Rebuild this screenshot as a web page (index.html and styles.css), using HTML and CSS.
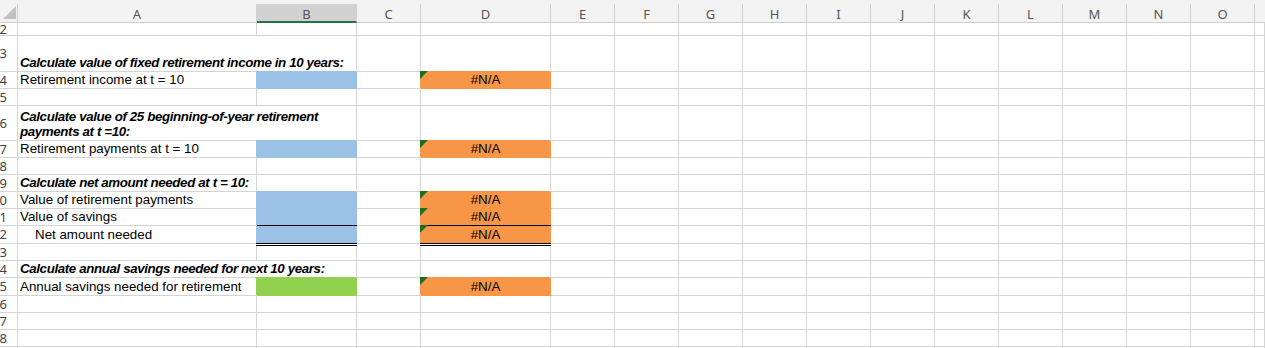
FILE: index.html
```html
<!DOCTYPE html>
<html lang="en">
<head>
    <meta charset="UTF-8">
    <meta name="viewport" content="width=device-width, initial-scale=1.0">
    <title>Retirement Savings</title>
    <link rel="stylesheet" href="styles.css">
</head>
<body>
    <div class="sheet">
        <!-- column headers -->
        <div class="row head">
            <div class="corner"><span class="tri"></span></div>
            <div>A</div><div class="sel">B</div><div>C</div><div>D</div><div>E</div><div>F</div><div>G</div><div>H</div>
            <div>I</div><div>J</div><div>K</div><div>L</div><div>M</div><div>N</div><div>O</div><div class="last"></div>
        </div>

        <div class="row h13">
            <div class="num">2</div><div></div><div></div><div></div><div></div><div></div><div></div><div></div><div></div>
            <div></div><div></div><div></div><div></div><div></div><div></div><div></div><div></div>
        </div>

        <div class="row h36">
            <div class="num">3</div><div class="title spill">Calculate value of fixed retirement income in 10 years:</div><div></div><div></div><div></div><div></div><div></div><div></div><div></div>
            <div></div><div></div><div></div><div></div><div></div><div></div><div></div><div></div>
        </div>

        <div class="row h17">
            <div class="num">4</div><div>Retirement income at t = 10</div><div class="blue"></div><div></div><div class="orange flag val">#N/A</div><div></div><div></div><div></div><div></div>
            <div></div><div></div><div></div><div></div><div></div><div></div><div></div><div></div>
        </div>

        <div class="row h17">
            <div class="num">5</div><div></div><div></div><div></div><div></div><div></div><div></div><div></div><div></div>
            <div></div><div></div><div></div><div></div><div></div><div></div><div></div><div></div>
        </div>

        <div class="row h35">
            <div class="num">6</div><div class="title spill">Calculate value of 25 beginning-of-year retirement<br>payments at t =10:</div><div></div><div></div><div></div><div></div><div></div><div></div><div></div>
            <div></div><div></div><div></div><div></div><div></div><div></div><div></div><div></div>
        </div>

        <div class="row h17">
            <div class="num">7</div><div>Retirement payments at t = 10</div><div class="blue"></div><div></div><div class="orange flag val">#N/A</div><div></div><div></div><div></div><div></div>
            <div></div><div></div><div></div><div></div><div></div><div></div><div></div><div></div>
        </div>

        <div class="row h17">
            <div class="num">8</div><div></div><div></div><div></div><div></div><div></div><div></div><div></div><div></div>
            <div></div><div></div><div></div><div></div><div></div><div></div><div></div><div></div>
        </div>

        <div class="row h17">
            <div class="num">9</div><div class="title">Calculate net amount needed at t = 10:</div><div></div><div></div><div></div><div></div><div></div><div></div><div></div>
            <div></div><div></div><div></div><div></div><div></div><div></div><div></div><div></div>
        </div>

        <div class="row h17">
            <div class="num">10</div><div>Value of retirement payments</div><div class="blue"></div><div></div><div class="orange flag val">#N/A</div><div></div><div></div><div></div><div></div>
            <div></div><div></div><div></div><div></div><div></div><div></div><div></div><div></div>
        </div>

        <div class="row h17">
            <div class="num">11</div><div>Value of savings</div><div class="blue"></div><div></div><div class="orange flag val">#N/A</div><div></div><div></div><div></div><div></div>
            <div></div><div></div><div></div><div></div><div></div><div></div><div></div><div></div>
        </div>

        <div class="row h18">
            <div class="num">12</div><div class="indent">Net amount needed</div><div class="blue total"></div><div></div><div class="orange flag val total">#N/A</div><div></div><div></div><div></div><div></div>
            <div></div><div></div><div></div><div></div><div></div><div></div><div></div><div></div>
        </div>

        <div class="row h17">
            <div class="num">13</div><div></div><div></div><div></div><div></div><div></div><div></div><div></div><div></div>
            <div></div><div></div><div></div><div></div><div></div><div></div><div></div><div></div>
        </div>

        <div class="row h17">
            <div class="num">14</div><div class="title spill">Calculate annual savings needed for next 10 years:</div><div></div><div></div><div></div><div></div><div></div><div></div><div></div>
            <div></div><div></div><div></div><div></div><div></div><div></div><div></div><div></div>
        </div>

        <div class="row h18">
            <div class="num">15</div><div>Annual savings needed for retirement</div><div class="green"></div><div></div><div class="orange flag val">#N/A</div><div></div><div></div><div></div><div></div>
            <div></div><div></div><div></div><div></div><div></div><div></div><div></div><div></div>
        </div>

        <div class="row h17">
            <div class="num">16</div><div></div><div></div><div></div><div></div><div></div><div></div><div></div><div></div>
            <div></div><div></div><div></div><div></div><div></div><div></div><div></div><div></div>
        </div>

        <div class="row h17">
            <div class="num">17</div><div></div><div></div><div></div><div></div><div></div><div></div><div></div><div></div>
            <div></div><div></div><div></div><div></div><div></div><div></div><div></div><div></div>
        </div>

        <div class="row h17">
            <div class="num">18</div><div></div><div></div><div></div><div></div><div></div><div></div><div></div><div></div>
            <div></div><div></div><div></div><div></div><div></div><div></div><div></div><div></div>
        </div>

        <div class="row h17">
            <div class="num">19</div><div></div><div></div><div></div><div></div><div></div><div></div><div></div><div></div>
            <div></div><div></div><div></div><div></div><div></div><div></div><div></div><div></div>
        </div>
    </div>
</body>
</html>
```

FILE: styles.css
```css
body {
    margin: 0;
    background-color: #ffffff;
    font-family: "Liberation Sans", Arial, sans-serif;
}

.sheet {
    width: 1265px;
    height: 348px;
    overflow: hidden;
}

.row {
    display: grid;
    grid-template-columns: 18px 239px 100px 64px 130px repeat(11, 64px) 1fr;
    grid-template-rows: minmax(0, 1fr);
}

.h13 { height: 13px; }
.h17 { height: 17px; }
.h18 { height: 18px; }
.h35 { height: 35px; }
.h36 { height: 36px; }

.row > div {
    box-sizing: border-box;
    display: flex;
    align-items: flex-end;
    padding: 0 2px 1px;
    border-right: 1px solid #d4d4d4;
    border-bottom: 1px solid #d4d4d4;
    font-size: 13.33px;
    color: #000000;
    white-space: nowrap;
    min-width: 0;
}

/* column headers */
.head {
    height: 19px;
    padding-top: 4px;
    background-color: #f3f3f3;
}

.head > div {
    display: block;
    padding: 2px 0 0;
    text-align: center;
    line-height: 16px;
    font-family: "Noto Sans", "Open Sans", sans-serif;
    font-size: 13px;
    color: #555555;
    border-right-color: #cfcfcf;
    border-bottom-color: #cfcfcf;
}

.head > .corner {
    display: flex;
    justify-content: flex-end;
    align-items: flex-end;
    padding: 0 1px 3px 0;
}

.tri {
    width: 0;
    height: 0;
    border-left: 13px solid transparent;
    border-bottom: 13px solid #c2c2c2;
}

.head > .sel {
    background-color: #d2d2d2;
    border-bottom: 2px solid #217346;
    box-shadow: -1px 0 0 #d2d2d2;
}

.head > .last {
    border-right: none;
}

/* row numbers */
.row > .num {
    justify-content: flex-end;
    align-items: center;
    overflow: hidden;
    padding: 0 10px 0 0;
    line-height: 13px;
    font-family: "Noto Sans", "Open Sans", sans-serif;
    font-size: 13px;
    color: #444444;
}

/* cell text */
.title {
    font-weight: bold;
    font-style: italic;
    letter-spacing: -0.38px;
}

.row > .spill {
    border-right-color: transparent;
}

.row > .indent {
    padding-left: 17px;
}

.row > .val {
    justify-content: center;
}

/* fills */
.row > .blue {
    background-color: #9bc2e6;
    border-color: #9bc2e6;
    box-shadow: -1px -1px 0 #9bc2e6;
}

.row > .orange {
    background-color: #f79646;
    border-color: #f79646;
    box-shadow: -1px -1px 0 #f79646;
}

.row > .green {
    background-color: #92d050;
    border-color: #92d050;
    box-shadow: -1px -1px 0 #92d050;
}

/* error indicator */
.flag {
    position: relative;
}

.flag::before {
    content: "";
    position: absolute;
    left: -1px;
    top: -1px;
    border-top: 8px solid #1e6e1e;
    border-right: 8px solid transparent;
}

/* total line: thin top, double bottom */
.row > .total {
    position: relative;
}

.row > .blue.total {
    box-shadow: 0 -1px 0 #000000, -1px 0 0 #9bc2e6;
}

.row > .orange.total {
    box-shadow: 0 -1px 0 #000000, -1px 0 0 #f79646;
}

.total::after {
    content: "";
    position: absolute;
    left: -1px;
    right: -1px;
    top: 100%;
    height: 1px;
    border-top: 1px solid #000000;
    border-bottom: 1px solid #000000;
    background-color: #ffffff;
}
```
